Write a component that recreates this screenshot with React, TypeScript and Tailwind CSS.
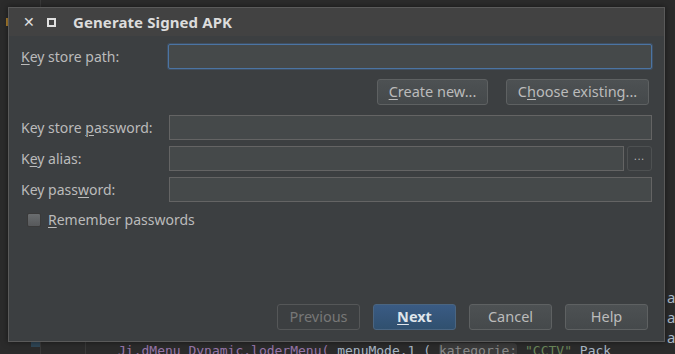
import React from 'react';

const font = { fontFamily: '"Noto Sans", "DejaVu Sans", sans-serif' };

const U = ({ children }: { children: React.ReactNode }) => (
  <span className="underline underline-offset-2 decoration-1">{children}</span>
);

const Field = ({ label, children }: { label: React.ReactNode; children?: React.ReactNode }) => (
  <div className="flex items-center h-[25px]">
    <div className="w-[148px] text-[14px] text-[#bbbbbb] whitespace-nowrap">{label}</div>
    <div className="flex-1 flex gap-[3px] h-full">
      <div className="flex-1 bg-[#45494a] border border-[#646464]" />
      {children}
    </div>
  </div>
);

const Btn = ({
  children,
  className = '',
}: {
  children: React.ReactNode;
  className?: string;
}) => (
  <div
    className={`h-[26px] flex items-center justify-center rounded-[3px] border text-[14.5px] ${className}`}
  >
    {children}
  </div>
);

const normalBtn = 'border-[#5e6162] bg-gradient-to-b from-[#4d5153] to-[#45494b] text-[#bbbbbb]';

export default function App() {
  return (
    <div style={font} className="relative w-[675px] h-[354px] bg-[#2b2b2b] overflow-hidden">
      {/* IDE behind the dialog */}
      <div className="absolute left-[40px] top-0 h-full w-px bg-[#3a3a3a]" />
      <div className="absolute left-[85px] top-[340px] h-[14px] w-px bg-[#3a3a3a]" />
      <div className="absolute left-[6px] top-[18px] w-[2px] h-[8px] bg-[#b0822f]" />
      <div className="absolute left-[31px] top-[342px] w-[9px] h-[5px] bg-[#2f4656]" />
      <div className="absolute left-[118px] top-[343px] whitespace-nowrap text-[13px] leading-[16px] text-[#9876aa]" style={{ fontFamily: '"DejaVu Sans Mono", monospace' }}>
        <span>Ji.dMenu Dynamic.loderMenu(</span>
        <span className="text-[#a9b7c6]"> menuMode</span>
        <span className="text-[#a9b7c6]">.1 ( </span>
        <span className="bg-[#3b3b3b] text-[#8a8a8a] rounded">kategorie:</span>
        <span className="text-[#6a8759]"> "CCTV" </span>
        <span className="text-[#a9b7c6]">    Pack</span>
      </div>
      <div className="absolute left-[667px] top-[288px] flex flex-col gap-[1px] text-[15px] leading-[19px] text-[#a9b7c6]">
        <span>a</span>
        <span>a</span>
        <span>a</span>
      </div>

      {/* Dialog */}
      <div className="absolute left-[8px] top-[7px] w-[657px] h-[335px] flex flex-col bg-[#3c3f41] border border-[#5a5a5a] shadow-[0_0_6px_rgba(0,0,0,0.5)]">
        <div className="h-[28px] flex items-center bg-[#424242] text-[#dcdcdc] shrink-0">
          <span className="ml-[14px] w-[14px] text-[14px] font-bold text-[#e0e0e0] leading-none">✕</span>
          <span className="ml-[10px] w-[9px] h-[9px] border-[2px] border-[#e0e0e0]" />
          <span className="ml-[17px] text-[15px] font-bold tracking-[0.1px]">Generate Signed APK</span>
        </div>

        <div className="flex-1 flex flex-col pl-[12px] pr-[12px] pt-[8px]">
          <div className="flex items-center h-[25px]">
            <div className="w-[147px] text-[14px] text-[#bbbbbb]">
              <U>K</U>ey store path:
            </div>
            <div className="flex-1 h-full bg-[#45494a] border border-[#4b74a3] rounded-[2px] shadow-[0_0_0_1px_rgba(70,110,160,0.35)]" />
          </div>

          <div className="flex justify-end gap-[18px] mt-[10px] pr-[3px]">
            <Btn className={`w-[111px] ${normalBtn}`}>
              <U>C</U>reate new...
            </Btn>
            <Btn className={`w-[143px] ${normalBtn}`}>
              C<U>h</U>oose existing...
            </Btn>
          </div>

          <div className="flex flex-col gap-[6px] mt-[10px]">
            <Field label={<>Key store <U>p</U>assword:</>} />
            <Field
              label={
                <>
                  K<U>e</U>y alias:
                </>
              }
            >
              <div className="w-[25px] h-full rounded-[3px] border border-[#4e5152] bg-[#3c3f41] flex items-center justify-center text-[10px] text-[#bbbbbb] tracking-[1px] pb-[4px]">
                ...
              </div>
            </Field>
            <Field label={<>Key pass<U>w</U>ord:</>} />
          </div>

          <div className="flex items-center mt-[7px] ml-[6px] gap-[7px]">
            <div className="w-[14px] h-[14px] rounded-[2px] bg-gradient-to-b from-[#6a6d6f] to-[#57595b] border border-[#3a3a3a]" />
            <span className="text-[14px] text-[#bbbbbb]">
              <U>R</U>emember passwords
            </span>
          </div>

          <div className="flex-1" />

          <div className="flex justify-end gap-[13px] pr-[4px] mb-[11px]">
            <Btn className="w-[83px] border-[#555758] bg-[#3c3f41] text-[#777777]">Previous</Btn>
            <Btn className="w-[83px] border-[#4a6581] bg-gradient-to-b from-[#3a5b84] to-[#30506f] text-[#dfe4ea] font-bold">
              <U>N</U>ext
            </Btn>
            <Btn className={`w-[83px] ${normalBtn}`}>Cancel</Btn>
            <Btn className={`w-[83px] ${normalBtn}`}>Help</Btn>
          </div>
        </div>
      </div>
    </div>
  );
}
